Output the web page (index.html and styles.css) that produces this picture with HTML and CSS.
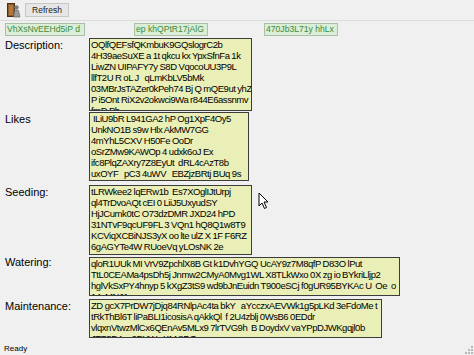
FILE: index.html
```html
<!DOCTYPE html>
<html lang="en">
<head>
    <meta charset="UTF-8" />
    <title>Plant</title>
    <link rel="stylesheet" href="styles.css">
</head>
<body>
    <div class="window">
        <div class="toolbar">
            <div class="tool-icon">
                <svg width="15" height="16" viewBox="0 0 15 16">
                    <rect x="1.5" y="1.5" width="7" height="13" fill="#8a5a2b" stroke="#4a2e12" stroke-width="1"/>
                    <rect x="3" y="3" width="4" height="10" fill="#b07a3c"/>
                    <circle cx="10.5" cy="5.5" r="2.2" fill="#7d7d7d"/>
                    <path d="M7.5 15 L8.5 8.5 L12.5 8.5 L14 15 Z" fill="#9a9a9a" stroke="#555" stroke-width="0.6"/>
                </svg>
            </div>
            <button class="tool-button">Refresh</button>
        </div>

        <div class="tags">
            <div class="tag tag-1">VhXsNvEEHd5iP d</div>
            <div class="tag tag-2">ep khQPtR17jAlG</div>
            <div class="tag tag-3">470Jb3L71y hhLx</div>
        </div>

        <div class="form">
            <div class="row row-desc">
                <div class="label">Description:</div>
                <div class="box">OQlfQEFsfQKmbuK9GQslogrC2b
4H39aeSuXE a 1t qkcu kx YpxSfnFa 1k
LiwZN UIPAFY7y S8D VqocoUU3P9L
llfT2U R oL J   qLmKbLV5bMk
03MBrJsTAZer0kPeh74 Bj Q mQE9ut yhZ
P i5Ont RiX2v2okwci9Wa r844E6assnmv
fmD Pb</div>
            </div>
            <div class="row row-likes">
                <div class="label">Likes</div>
                <div class="box"> ILiU9bR L941GA2 hP Og1XpF4Oy5
UnkNO1B s9w Hlx AkMW7GG
4mYhL5CXV H50Fe OoDr
oSrZMw9KAWOp 4 udxk6oJ Ex
ifc8PlqZAXry7Z8EyUt  dRL4cAzT8b
uxOYF   pC3 4uWV   EBZjzBRtj BUq 9s
3x7L82Bsa ymc7slQYUKokPSDqYvs</div>
            </div>
            <div class="row row-seeding">
                <div class="label">Seeding:</div>
                <div class="box">tLRWkee2 lqERw1b  Es7XOglIJtUrpj
ql4TrDvoAQt cEI 0 LiiJ5UxyudSY
HjJCumk0tC O73dzDMR JXD24 hPD
31NTvF9qcUF9FL 3 VQn1 hQ8Q1w8T9
KCViqXCBiNJS3yX oo lte ulZ X 1F F6RZ
6gAGYTe4W RUoeVq yLOsNK 2e
LwFMyY</div>
            </div>
            <div class="row row-watering">
                <div class="label">Watering:</div>
                <div class="box">qloR1UUk MI VrV9ZpchlX8B Gt k1DvhYGQ UcAY9z7M8qfP D83O lPut
TtL0CEAMa4psDh5j Jnmw2CMyA0Mvg1WL X8TLkWxo 0X zg io BYkriLljp2
hglVkSxPY4hnyp 5 kXgZ3tS9 wd9bJnEuidn T900eSCj f0gUR95BYKAc U  Oe  o
14zMNJ1x</div>
            </div>
            <div class="row row-maint">
                <div class="label">Maintenance:</div>
                <div class="box">ZD gcX7PrDW7jDjq84RNlpAc4ta bkY   aYcczxAEVWk1g5pLKd 3eFdoMe t
tRkThBl6T liPaBLI1icosisA qAkkQl  f 2U4zblj 0WsB6 0EDdr
vlqxnVtwzMlCx6QEnAv5MLx9 7lrTVG9h  B DoydxV vaYPpDJWKgqjl0b
JT7SB4ao9BYWc KM 8DG</div>
            </div>
        </div>

        <div class="status">
            <span>Ready</span>
            <svg class="grip" width="11" height="11" viewBox="0 0 11 11">
                <g fill="#b8b8b8">
                    <rect x="8" y="2" width="2" height="2"/>
                    <rect x="5" y="5" width="2" height="2"/>
                    <rect x="8" y="5" width="2" height="2"/>
                    <rect x="2" y="8" width="2" height="2"/>
                    <rect x="5" y="8" width="2" height="2"/>
                    <rect x="8" y="8" width="2" height="2"/>
                </g>
            </svg>
        </div>

        <svg class="cursor" width="12" height="18" viewBox="0 0 12 18">
            <path d="M1 1 L1 14 L4 11 L6.5 16.5 L8.5 15.5 L6 10 L10 10 Z" fill="#fff" stroke="#000" stroke-width="1"/>
        </svg>
    </div>
</body>
</html>
```

FILE: styles.css
```css
body {
    margin: 0;
    background-color: #f0f0f0;
    font-family: "Liberation Sans", Arial, sans-serif;
    font-size: 11px;
    color: #000;
}

.window {
    position: relative;
    width: 474px;
    height: 355px;
    display: flex;
    flex-direction: column;
    overflow: hidden;
}

.toolbar {
    height: 20px;
    display: flex;
    align-items: center;
    gap: 4px;
    padding-left: 6px;
    border-bottom: 1px solid #dcdcdc;
}

.tool-icon {
    width: 15px;
    height: 16px;
    display: flex;
    align-items: center;
    justify-content: center;
}

.tool-button {
    height: 14px;
    width: 44px;
    padding: 0;
    margin: 0;
    font-family: inherit;
    font-size: 8.5px;
    color: #222;
    background-color: #e6e6e6;
    border: 1px solid #c8c8c8;
    line-height: 12px;
}

.tags {
    display: flex;
    padding-top: 2px;
    margin-bottom: 2px;
}

.tag {
    height: 11px;
    line-height: 11px;
    padding: 0 1px;
    border: 1px solid #a8c0a8;
    background-color: #dbeed8;
    color: #3d8b3d;
    font-size: 8.6px;
    white-space: nowrap;
    overflow: hidden;
}

.tag-1 {
    margin-left: 5px;
    width: 76px;
}

.tag-2 {
    margin-left: 49px;
    width: 70px;
}

.tag-3 {
    margin-left: 56px;
    width: 70px;
}

.form {
    flex: 1;
    display: flex;
    flex-direction: column;
}

.row {
    display: flex;
    align-items: flex-start;
}

.label {
    width: 84px;
    padding-left: 5px;
    padding-top: 2px;
    line-height: 11px;
    flex-shrink: 0;
}

.box {
    box-sizing: border-box;
    border: 1px solid #3c3c3c;
    background-color: #e9efb6;
    padding: 0 1px;
    font-size: 9.5px;
    letter-spacing: -0.45px;
    word-spacing: -0.3px;
    line-height: 11px;
    white-space: pre;
    overflow: hidden;
}

.row-desc .box {
    width: 163px;
    height: 73px;
}

.row-likes {
    margin-top: 1px;
}

.row-likes .box {
    width: 160px;
    height: 69px;
}

.row-seeding {
    margin-top: 4px;
}

.row-seeding .box {
    width: 163px;
    height: 70px;
}

.row-watering {
    margin-top: 2px;
}

.row-watering .label {
    padding-top: 0;
}

.row-watering .box {
    width: 311px;
    height: 39px;
}

.row-maint {
    margin-top: 3px;
}

.row-maint .box {
    width: 293px;
    height: 39px;
}

.status {
    height: 16px;
    display: flex;
    align-items: center;
    justify-content: space-between;
    padding-left: 4px;
    padding-top: 2px;
    box-sizing: border-box;
    font-size: 8px;
}

.grip {
    align-self: flex-end;
}

.cursor {
    position: absolute;
    left: 258px;
    top: 192px;
}
```
